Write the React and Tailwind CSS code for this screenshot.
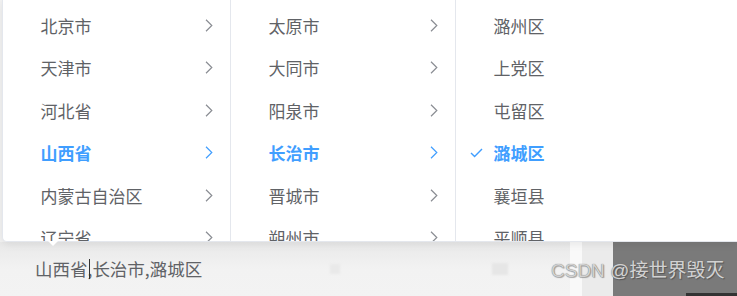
import React from 'react';

const font = { fontFamily: '"Noto Sans CJK SC", "Microsoft YaHei", sans-serif' };

const provinces = ['北京市', '天津市', '河北省', '山西省', '内蒙古自治区', '辽宁省'];
const cities = ['太原市', '大同市', '阳泉市', '长治市', '晋城市', '朔州市'];
const districts = ['潞州区', '上党区', '屯留区', '潞城区', '襄垣县', '平顺县'];

const Chevron = ({ active }) => (
    <svg width="8" height="13" viewBox="0 0 8 13" fill="none">
        <polyline
            points="1,0.8 6.8,6.5 1,12.2"
            stroke={active ? '#409eff' : '#8a8d93'}
            strokeWidth="1.2"
        />
    </svg>
);

const Check = () => (
    <svg width="13" height="10" viewBox="0 0 13 10" fill="none">
        <polyline points="1,5 4.6,8.6 12,1" stroke="#409eff" strokeWidth="1.4" />
    </svg>
);

const Column = ({ items, active, arrows, className }) => (
    <div className={`pt-[4px] ${className}`}>
        {items.map((label) => {
            const on = label === active;
            return (
                <div key={label} className="h-[42.5px] flex items-center pr-[17px]">
                    <div className="w-[37.5px] flex justify-end pr-[11px]">
                        {!arrows && on && <Check />}
                    </div>
                    <span
                        className={`flex-1 text-[17px] ${on ? 'text-[#409eff] font-bold' : 'text-[#606266]'}`}
                    >
                        {label}
                    </span>
                    {arrows && <Chevron active={on} />}
                </div>
            );
        })}
    </div>
);

export default function App() {
    return (
        <div className="relative w-[737px] h-[296px] overflow-hidden bg-[#f2f2f2]" style={font}>
            {/* cascader panel */}
            <div className="relative z-10 ml-[2px] h-[242px] flex bg-white border-l border-b border-[#e4e7ed] rounded-bl-[5px] shadow-[0_2px_8px_rgba(0,0,0,0.08)] overflow-hidden">
                <Column items={provinces} active="山西省" arrows className="w-[228px] border-r border-[#e4e7ed]" />
                <Column items={cities} active="长治市" arrows className="w-[225px] border-r border-[#e4e7ed]" />
                <Column items={districts} active="潞城区" className="flex-1" />
            </div>
            <div className="absolute z-20 left-[48px] top-[241px] w-0 h-0 border-l-[5px] border-r-[5px] border-t-[5px] border-l-transparent border-r-transparent border-t-white" />

            {/* input row */}
            <div className="flex h-[54px]">
                <div className="w-[570px] flex items-center pl-[35px] bg-gradient-to-b from-[#e9e9e9] via-[#f2f2f2] to-[#f3f3f3]">
                    <span className="text-[17.5px] text-[#606266]">山西省,</span>
                    <span className="w-px h-[20px] bg-[#333] -ml-[3px] mr-[2px]" />
                    <span className="text-[17.5px] text-[#606266]">长治市,潞城区</span>
                    <span className="ml-[128px] w-[10px] h-[10px] bg-[#e9e9e9] blur-[1px]" />
                    <span className="ml-[152px] w-[16px] h-[12px] bg-[#e6e6e6] blur-[1px]" />
                </div>
                <div className="w-[12px] bg-[#f9f9f9]" />
                <div className="w-[31px] bg-[#ebebeb]" />
                <div className="flex-1 bg-[#7a7a7a]" />
            </div>

            {/* watermark */}
            <div
                className="absolute z-20 left-[551px] top-[261px] text-[19px] text-[#d2d2d2] leading-none whitespace-nowrap [text-shadow:0_0_1px_#666,1px_1px_1px_rgba(0,0,0,0.3)]"
                style={{ fontFamily: '"Liberation Sans", "Noto Sans CJK SC", sans-serif' }}
            >
                CSDN @接世界毁灭
            </div>
            <div className="absolute left-[686px] top-[293px] w-[51px] h-[3px] bg-[#333]" />
        </div>
    );
}
